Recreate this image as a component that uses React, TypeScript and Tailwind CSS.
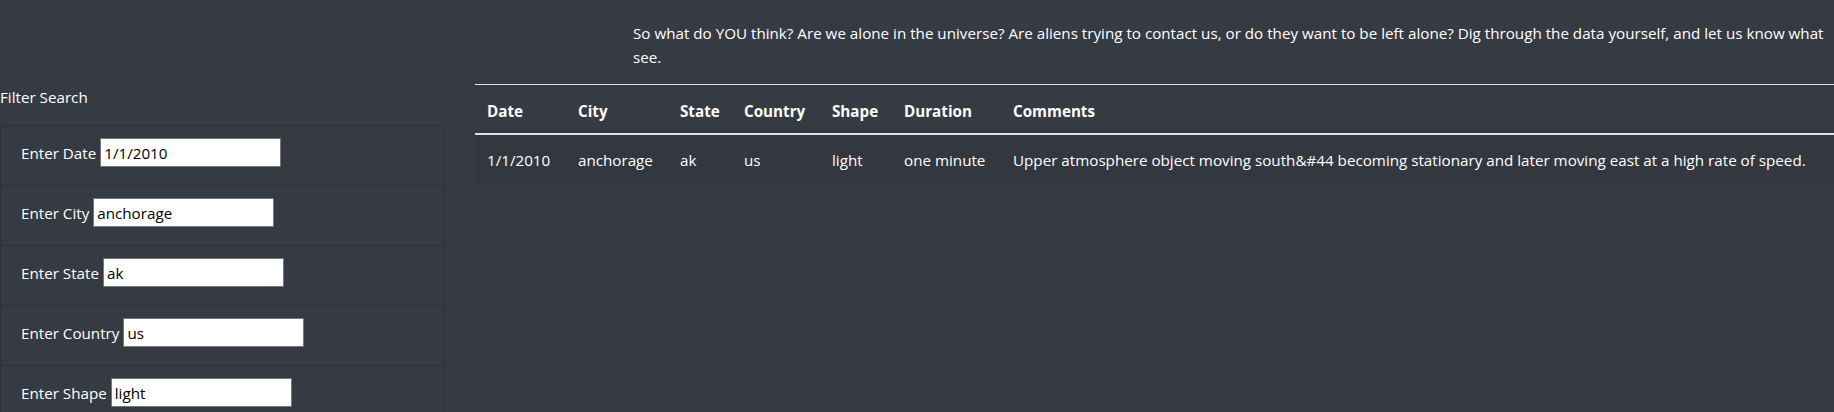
const filters = [
  { label: "Enter Date", value: "1/1/2010" },
  { label: "Enter City", value: "anchorage" },
  { label: "Enter State", value: "ak" },
  { label: "Enter Country", value: "us" },
  { label: "Enter Shape", value: "light" },
];

const columns = [
  { name: "Date", w: "w-[91px]" },
  { name: "City", w: "w-[102px]" },
  { name: "State", w: "w-[64px]" },
  { name: "Country", w: "w-[88px]" },
  { name: "Shape", w: "w-[72px]" },
  { name: "Duration", w: "w-[109px]" },
  { name: "Comments", w: "" },
];

const row = [
  "1/1/2010",
  "anchorage",
  "ak",
  "us",
  "light",
  "one minute",
  "Upper atmosphere object moving south&#44 becoming stationary and later moving east at a high rate of speed.",
];

export default function App() {
  return (
    <div className="w-[1834px] h-[412px] overflow-hidden bg-[#363a43] text-white text-[15.2px] leading-6 font-['Open_Sans','Liberation_Sans',sans-serif] flex gap-[30px]">
      <div className="w-[445px] shrink-0 pt-[85px]">
        <div className="h-[40px]">Filter Search</div>
        <ul className="border border-[#2c3038] rounded-t">
          {filters.map((f, i) => (
            <li
              key={f.label}
              className={`px-5 pt-3 pb-[18px] ${i > 0 ? "border-t border-[#2c3038]" : ""}`}
            >
              <div className="flex items-center h-[29px]">
                <label className="mr-1">{f.label}</label>
                <input
                  defaultValue={f.value}
                  className="w-[181px] h-[29px] bg-white text-black border border-[#767676] px-[3px] outline-none"
                />
              </div>
            </li>
          ))}
        </ul>
      </div>

      <div className="flex-1 min-w-0">
        <p className="ml-[158px] pt-[21px] pb-[15px] whitespace-nowrap">
          So what do YOU think? Are we alone in the universe? Are aliens trying to contact us, or do they want to be left alone? Dig through the data yourself, and let us know what
          <br />
          see.
        </p>
        <table className="w-full border-collapse text-left">
          <thead>
            <tr className="border-t border-[#dee2e6] border-b-2">
              {columns.map((c) => (
                <th key={c.name} className={`${c.w} px-3 pt-[14px] pb-[10px] font-bold`}>
                  {c.name}
                </th>
              ))}
            </tr>
          </thead>
          <tbody>
            <tr className="bg-[#33373f]">
              {row.map((v, i) => (
                <td key={i} className="px-3 pt-[13px] pb-[11px] whitespace-nowrap">
                  {v}
                </td>
              ))}
            </tr>
          </tbody>
        </table>
      </div>
    </div>
  );
}
